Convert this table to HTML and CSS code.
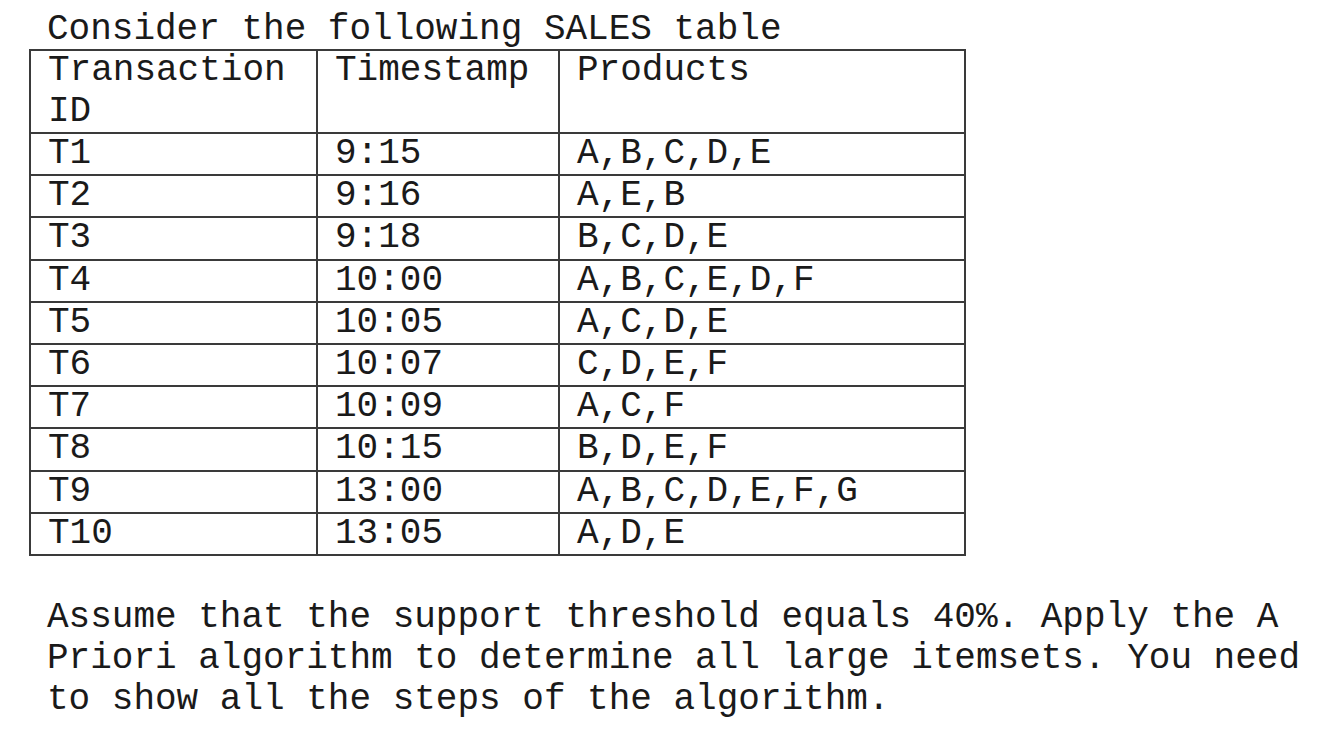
FILE: index.html
```html
<!DOCTYPE html>
<html>
<head>
<meta charset="utf-8">
<link rel="stylesheet" href="styles.css">
</head>
<body>
<div class="page">
  <div class="title">Consider the following SALES table</div>
  <table class="sales">
    <colgroup>
      <col class="c1"><col class="c2"><col class="c3">
    </colgroup>
    <tr class="head"><td>Transaction ID</td><td>Timestamp</td><td>Products</td></tr>
    <tr><td>T1</td><td>9:15</td><td>A,B,C,D,E</td></tr>
    <tr><td>T2</td><td>9:16</td><td>A,E,B</td></tr>
    <tr><td>T3</td><td>9:18</td><td>B,C,D,E</td></tr>
    <tr><td>T4</td><td>10:00</td><td>A,B,C,E,D,F</td></tr>
    <tr><td>T5</td><td>10:05</td><td>A,C,D,E</td></tr>
    <tr><td>T6</td><td>10:07</td><td>C,D,E,F</td></tr>
    <tr><td>T7</td><td>10:09</td><td>A,C,F</td></tr>
    <tr><td>T8</td><td>10:15</td><td>B,D,E,F</td></tr>
    <tr><td>T9</td><td>13:00</td><td>A,B,C,D,E,F,G</td></tr>
    <tr><td>T10</td><td>13:05</td><td>A,D,E</td></tr>
  </table>
  <p class="question">Assume that the support threshold equals 40%. Apply the A Priori algorithm to determine all large itemsets. You need to show all the steps of the algorithm.</p>
</div>
</body>
</html>
```
FILE: styles.css
```css
html, body {
  margin: 0;
  padding: 0;
  background: #fff;
}
.page {
  padding: 8px 0 0 29px;
  font-family: "Liberation Mono", "Courier New", monospace;
  font-size: 36px;
  color: #1a1a1a;
  line-height: 41px;
}
.title {
  padding-left: 18px;
  height: 41px;
  line-height: 43px;
}
.sales {
  border-collapse: collapse;
  table-layout: fixed;
  width: 935px;
}
.c1 { width: 287px; }
.c2 { width: 242px; }
.c3 { width: 406px; }
.sales td {
  border: 2px solid #3a3a3a;
  padding: 0 0 0 17px;
  line-height: 40.2px;
  vertical-align: top;
}
.sales tr.head td {
  line-height: 40.5px;
}
.question {
  margin: 41px 0 0 0;
  padding-left: 18px;
  width: 1270px;
  line-height: 41px;
}
```
